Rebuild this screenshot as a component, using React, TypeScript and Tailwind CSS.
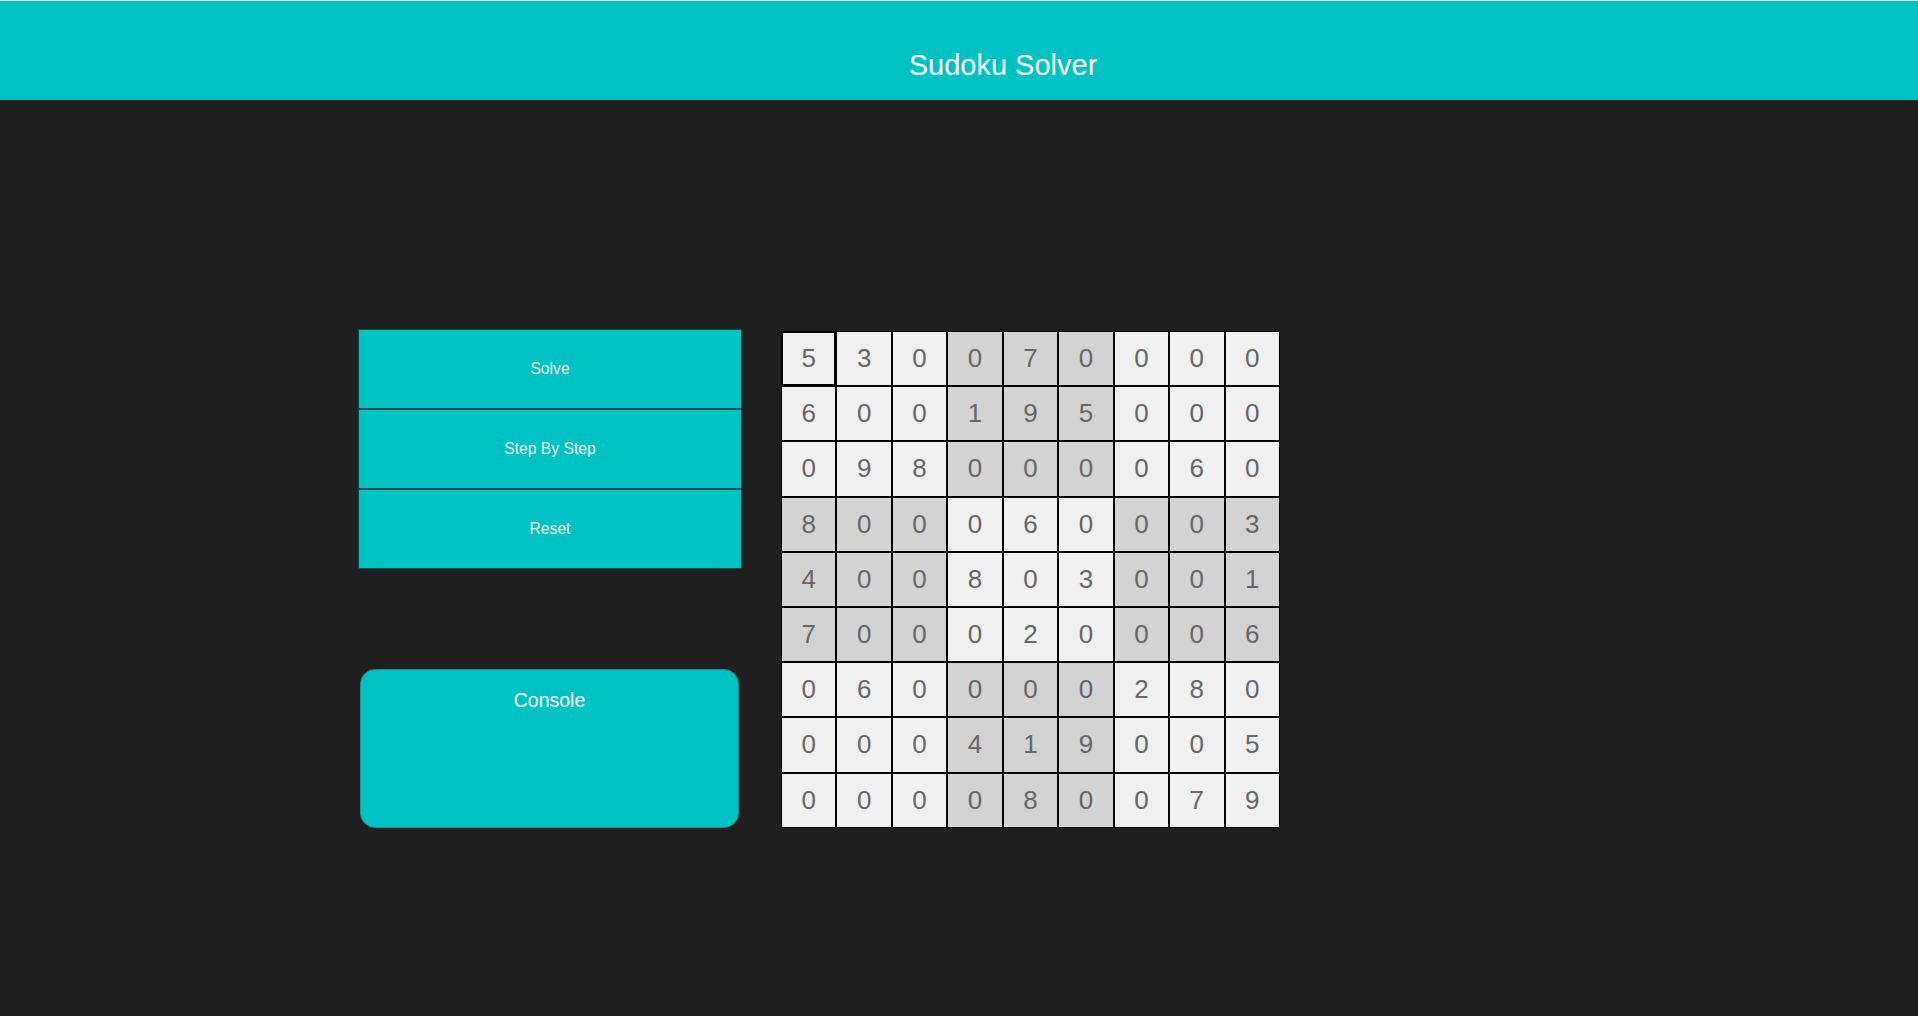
import React from "react";

const board: number[][] = [
  [5, 3, 0, 0, 7, 0, 0, 0, 0],
  [6, 0, 0, 1, 9, 5, 0, 0, 0],
  [0, 9, 8, 0, 0, 0, 0, 6, 0],
  [8, 0, 0, 0, 6, 0, 0, 0, 3],
  [4, 0, 0, 8, 0, 3, 0, 0, 1],
  [7, 0, 0, 0, 2, 0, 0, 0, 6],
  [0, 6, 0, 0, 0, 0, 2, 8, 0],
  [0, 0, 0, 4, 1, 9, 0, 0, 5],
  [0, 0, 0, 0, 8, 0, 0, 7, 9],
];

export default function App() {
  return (
    <div
      className="min-h-[1016px] w-full bg-[#1f1f1f]"
      style={{ fontFamily: '"Liberation Sans", Arial, sans-serif' }}
    >
      <header className="h-[100px] border-t border-[#e8f6f6] bg-[#00c2c2] pt-[50px] flex justify-center">
        <h1 className="pl-[88px] text-[29px] leading-[29px] font-normal text-white">
          Sudoku Solver
        </h1>
      </header>

      <main className="flex items-start pt-[229px] pl-[358px] gap-[39px]">
        <div className="flex flex-col w-[384px]">
          {["Solve", "Step By Step", "Reset"].map((label) => (
            <button
              key={label}
              className="h-[80px] w-full border border-[#0b4a4f] bg-[#00c2c2] text-[15.7px] text-[#f2f2f2] flex items-center justify-center"
            >
              {label}
            </button>
          ))}
          <div className="mt-[100px] ml-[2px] w-[379px] h-[159px] rounded-[15px] border border-[#1b8e91] bg-[#00c2c2] pt-[20px] flex justify-center items-start">
            <span className="text-[19.5px] leading-[20px] text-white">Console</span>
          </div>
        </div>

        <div className="mt-[2px] grid grid-cols-9 w-[499px]">
          {board.map((row, r) =>
            row.map((v, c) => {
              const gray = (Math.floor(r / 3) + Math.floor(c / 3)) % 2 === 1;
              const first = r === 0 && c === 0;
              return (
                <div
                  key={`${r}-${c}`}
                  className={`h-[55.2px] border border-black flex items-center justify-center text-[26px] text-[#666666] ${
                    gray ? "bg-[#d3d3d3]" : "bg-[#f0f0f0]"
                  } ${first ? "shadow-[inset_0_0_0_1px_#000]" : ""}`}
                >
                  {v}
                </div>
              );
            })
          )}
        </div>
      </main>
    </div>
  );
}
